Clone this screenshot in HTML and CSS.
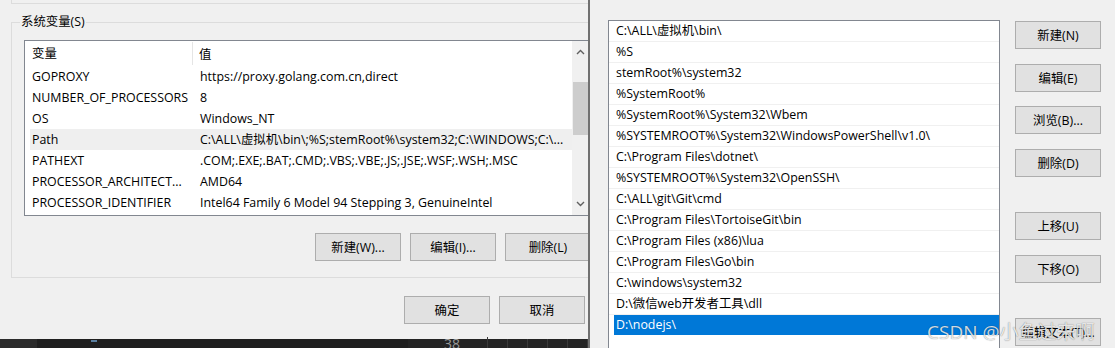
FILE: index.html
```html
<!DOCTYPE html>
<html lang="zh-CN">
<head>
  <meta charset="UTF-8" />
  <meta name="viewport" content="width=device-width, initial-scale=1" />
  <title>环境变量</title>
  <link rel="stylesheet" href="styles.css">
</head>
<body>
  <div class="screen">

    <!-- 环境变量 dialog (behind) -->
    <div class="win win-left">
      <div class="prev-group"></div>

      <fieldset class="group">
        <legend>系统变量(S)</legend>

        <div class="listview">
          <div class="lv-body">
            <div class="lv-head">
              <span class="col-name">变量</span>
              <span class="col-val">值</span>
            </div>
            <div class="lv-row">
              <span class="col-name">GOPROXY</span>
              <span class="col-val">https://proxy.golang.com.cn,direct</span>
            </div>
            <div class="lv-row">
              <span class="col-name">NUMBER_OF_PROCESSORS</span>
              <span class="col-val">8</span>
            </div>
            <div class="lv-row">
              <span class="col-name">OS</span>
              <span class="col-val">Windows_NT</span>
            </div>
            <div class="lv-row active">
              <span class="col-name">Path</span>
              <span class="col-val">C:\ALL\虚拟机\bin\;%S;stemRoot%\system32;C:\WINDOWS;C:\...</span>
            </div>
            <div class="lv-row">
              <span class="col-name">PATHEXT</span>
              <span class="col-val">.COM;.EXE;.BAT;.CMD;.VBS;.VBE;.JS;.JSE;.WSF;.WSH;.MSC</span>
            </div>
            <div class="lv-row">
              <span class="col-name">PROCESSOR_ARCHITECT...</span>
              <span class="col-val">AMD64</span>
            </div>
            <div class="lv-row">
              <span class="col-name">PROCESSOR_IDENTIFIER</span>
              <span class="col-val">Intel64 Family 6 Model 94 Stepping 3, GenuineIntel</span>
            </div>
          </div>

          <div class="scrollbar">
            <svg class="arrow" width="17" height="22" viewBox="0 0 17 22">
              <polyline points="5,13 8.5,9.5 12,13" fill="none" stroke="#606060" stroke-width="1.4" />
            </svg>
            <div class="thumb"></div>
            <div class="track"></div>
            <svg class="arrow" width="17" height="22" viewBox="0 0 17 22">
              <polyline points="5,9 8.5,12.5 12,9" fill="none" stroke="#606060" stroke-width="1.4" />
            </svg>
          </div>
        </div>

        <div class="btn-row">
          <button class="btn">新建(W)...</button>
          <button class="btn">编辑(I)...</button>
          <button class="btn">删除(L)</button>
        </div>
      </fieldset>

      <div class="dialog-btns">
        <button class="btn">确定</button>
        <button class="btn">取消</button>
      </div>

      <div class="taskbar">
        <div class="tb-start"></div>
        <div class="tb-mark"></div>
        <div class="tb-grid">
          <span class="tb-num">38</span>
          <span class="tb-cell"></span>
          <span class="tb-cell"></span>
          <span class="tb-cell"></span>
          <span class="tb-cell"></span>
          <span class="tb-cell"></span>
        </div>
      </div>
    </div>

    <div class="divider"></div>

    <!-- 编辑环境变量 dialog (front) -->
    <div class="win win-right">
      <div class="path-list">
        <div class="path-row">C:\ALL\虚拟机\bin\</div>
        <div class="path-row">%S</div>
        <div class="path-row">stemRoot%\system32</div>
        <div class="path-row">%SystemRoot%</div>
        <div class="path-row">%SystemRoot%\System32\Wbem</div>
        <div class="path-row">%SYSTEMROOT%\System32\WindowsPowerShell\v1.0\</div>
        <div class="path-row">C:\Program Files\dotnet\</div>
        <div class="path-row">%SYSTEMROOT%\System32\OpenSSH\</div>
        <div class="path-row">C:\ALL\git\Git\cmd</div>
        <div class="path-row">C:\Program Files\TortoiseGit\bin</div>
        <div class="path-row">C:\Program Files (x86)\lua</div>
        <div class="path-row">C:\Program Files\Go\bin</div>
        <div class="path-row">C:\windows\system32</div>
        <div class="path-row">D:\微信web开发者工具\dll</div>
        <div class="path-row selected">D:\nodejs\</div>
      </div>

      <div class="side-btns">
        <button class="btn">新建(N)</button>
        <button class="btn">编辑(E)</button>
        <button class="btn">浏览(B)...</button>
        <button class="btn">删除(D)</button>
        <button class="btn gap">上移(U)</button>
        <button class="btn">下移(O)</button>
        <button class="btn gap">编辑文本(T)...</button>
      </div>

      <div class="watermark">CSDN @小鱼过来啊</div>
    </div>

  </div>
</body>
</html>
```

FILE: styles.css
```css
/* Global */
* {
  margin: 0;
  padding: 0;
  box-sizing: border-box;
}

body {
  font-family: "Segoe UI", "Open Sans", "Noto Sans CJK SC", sans-serif;
  font-size: 12.4px;
  color: #000;
  background: #f0f0f0;
  overflow: hidden;
}

.screen {
  display: flex;
  width: 1115px;
  height: 348px;
  overflow: hidden;
}

.win {
  background: #f0f0f0;
  height: 348px;
  overflow: hidden;
}

.win-left {
  width: 588px;
  flex-shrink: 0;
}

.divider {
  width: 2px;
  flex-shrink: 0;
  background: #707070;
}

.win-right {
  flex: 1;
  display: flex;
  position: relative;
}

/* buttons */
.btn {
  width: 86px;
  height: 28px;
  flex-shrink: 0;
  background: #e1e1e1;
  border: 1px solid #adadad;
  font-family: inherit;
  font-size: 12.4px;
  color: #000;
}

/* left dialog */
.prev-group {
  height: 4px;
  margin-left: 11px;
  border-left: 1px solid #dcdcdc;
  border-bottom: 1px solid #dcdcdc;
}

.group {
  width: 600px;
  margin: 8px 0 0 11px;
  padding: 0 0 16px 0;
  border: 1px solid #dcdcdc;
  border-right: none;
}

.group legend {
  margin-left: 8px;
  padding: 0 1px;
  line-height: 20px;
}

.listview {
  display: flex;
  width: 566px;
  height: 176px;
  margin: 8px 0 0 12px;
  background: #fff;
  border: 1px solid #828790;
}

.lv-body {
  flex: 1;
  min-width: 0;
}

.lv-head {
  display: flex;
  height: 25px;
  align-items: center;
}

.lv-head .col-name {
  width: 168px;
  padding-left: 7px;
  line-height: 23px;
  border-right: 1px solid #e5e5e5;
}

.lv-head .col-val {
  padding-left: 6px;
}

.lv-row {
  display: flex;
  height: 21px;
  line-height: 21px;
  margin-left: 5px;
  white-space: nowrap;
}

.lv-row .col-name {
  width: 163px;
  padding-left: 2px;
  flex-shrink: 0;
  overflow: hidden;
}

.lv-row .col-val {
  flex: 1;
  min-width: 0;
  padding-left: 7px;
  overflow: hidden;
}

.lv-row.active {
  background: #efefef;
}

.scrollbar {
  width: 17px;
  flex-shrink: 0;
  display: flex;
  flex-direction: column;
  background: #f0f0f0;
}

.scrollbar .arrow {
  display: block;
  flex-shrink: 0;
}

.scrollbar .thumb {
  height: 53px;
  margin: 19px 1px 0;
  background: #cdcdcd;
}

.scrollbar .track {
  flex: 1;
}

.btn-row {
  display: flex;
  gap: 9px;
  margin-top: 17px;
  padding-left: 303px;
}

.dialog-btns {
  display: flex;
  justify-content: flex-end;
  gap: 9px;
  margin-top: 18px;
  padding-right: 3px;
}

.taskbar {
  display: flex;
  height: 20px;
  margin-top: 15px;
  background: #1f1f1f;
}

.tb-start {
  width: 46px;
  background: #2b2b2b;
}

.tb-mark {
  width: 8px;
  height: 2px;
  margin: 1px 0 0 54px;
  background: #5a7fa0;
}

.tb-grid {
  display: flex;
  margin-left: 311px;
  flex: 1;
  background: #242424;
}

.tb-num {
  width: 80px;
  padding-left: 36px;
  color: #9a9a9a;
  font-size: 14px;
  line-height: 14px;
  margin-top: -2px;
  border-right: 1px solid #3a3a3a;
}

.tb-cell {
  width: 20px;
  border-right: 1px solid #3a3a3a;
}

/* right dialog */
.path-list {
  width: 392px;
  height: 340px;
  margin: 20px 0 0 18px;
  flex-shrink: 0;
  background: #fff;
  border: 1px solid #828790;
}

.path-row {
  height: 21px;
  line-height: 20px;
  padding-left: 7px;
  border-bottom: 1px solid #f0f0f0;
  white-space: nowrap;
  overflow: hidden;
}

.path-row.selected {
  background: linear-gradient(to right, transparent 5px, #0078d7 5px);
  color: #fff;
  border-bottom-color: #fff;
}

.side-btns {
  display: flex;
  flex-direction: column;
  gap: 14.5px;
  margin: 21px 0 0 15px;
}

.side-btns .btn.gap {
  margin-top: 21px;
}

.watermark {
  position: absolute;
  left: 337px;
  top: 317px;
  font-size: 19px;
  white-space: nowrap;
  color: rgba(255, 255, 255, 0.82);
  text-shadow: 0 0 1px rgba(0, 0, 0, 0.55);
}
```
